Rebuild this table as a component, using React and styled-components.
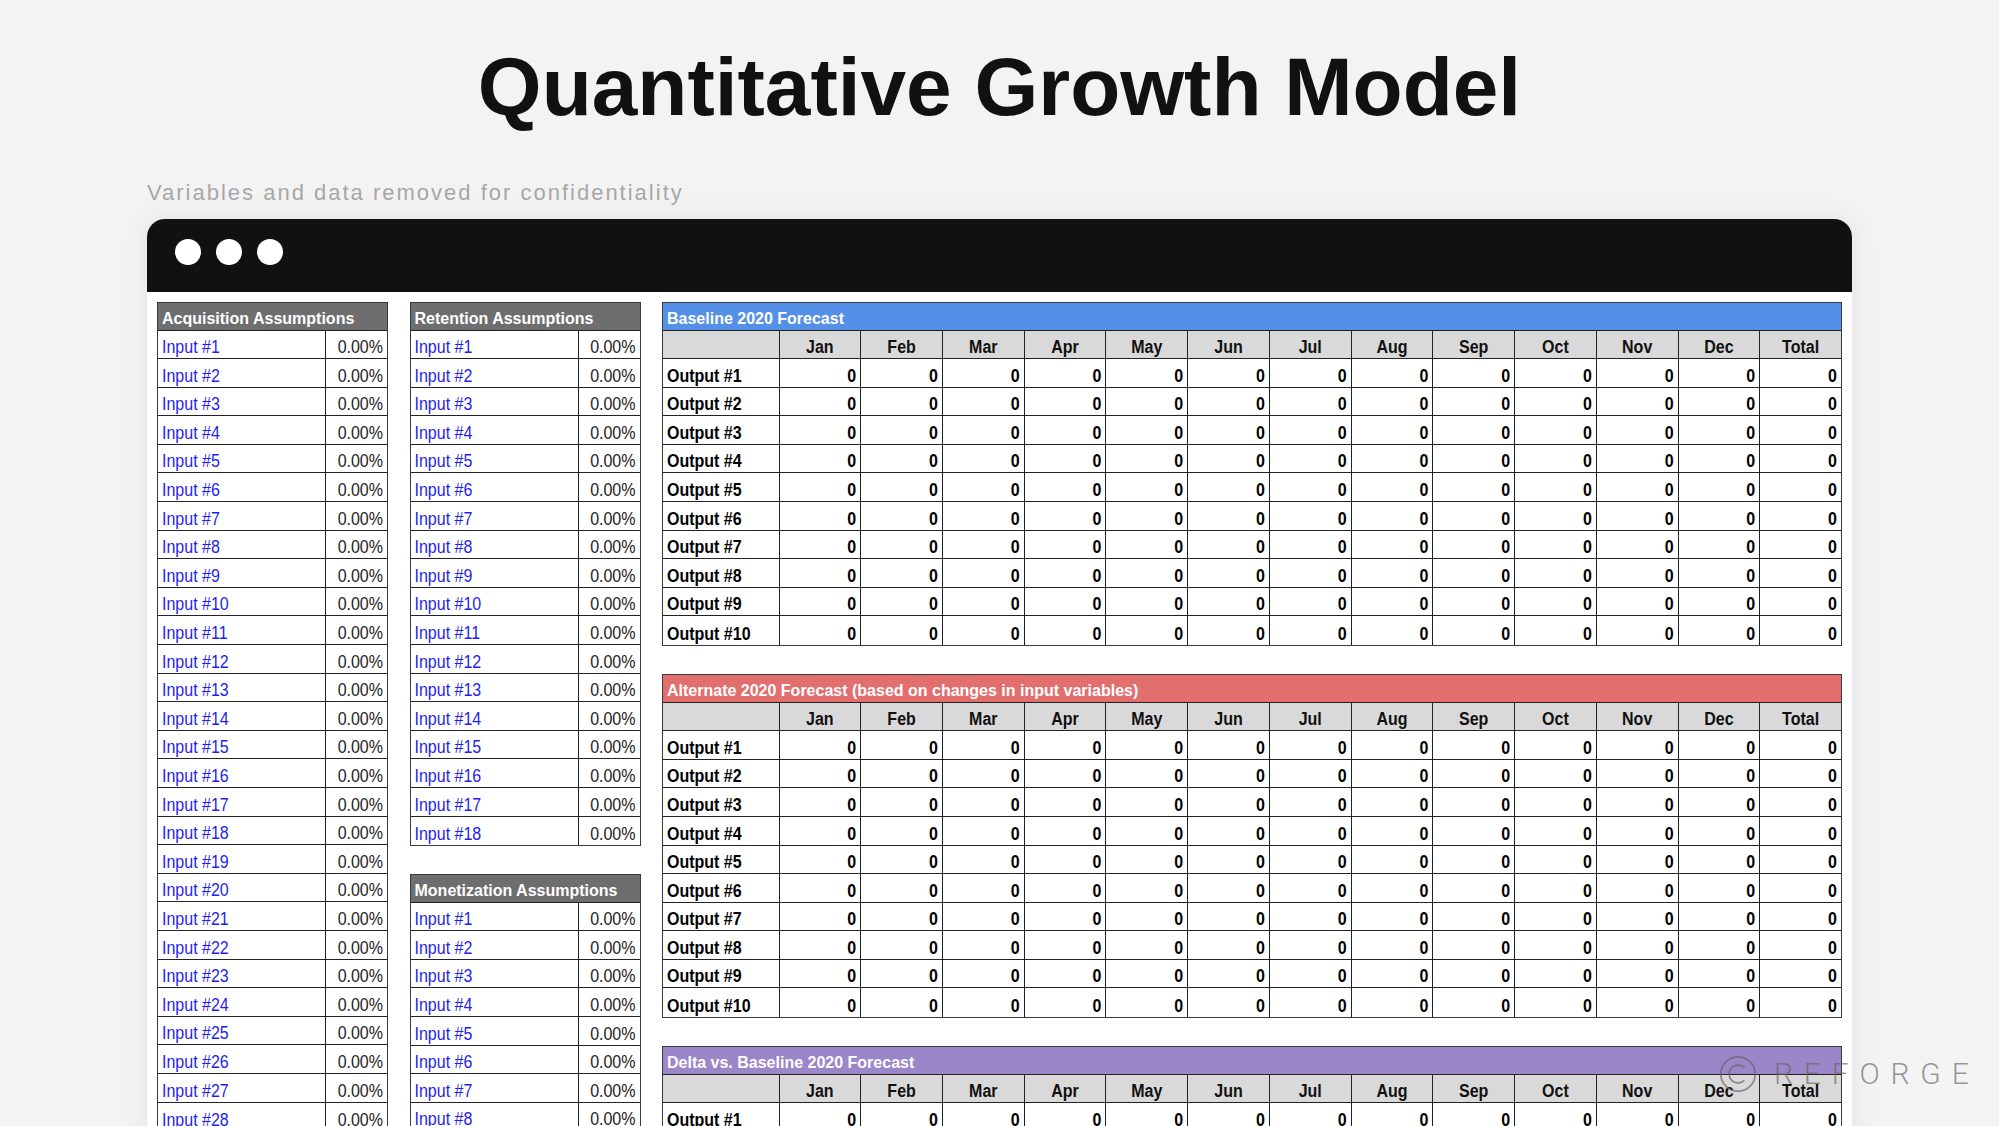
import React from 'react';
import styled, { createGlobalStyle } from 'styled-components';

const GlobalStyle = createGlobalStyle`
  html, body {
    margin: 0;
    padding: 0;
    background: #f3f3f3;
    height: 1126px;
    overflow: hidden;
  }
  body {
    font-family: "Liberation Sans", Arial, sans-serif;
  }
  *, *::before, *::after { box-sizing: border-box; }
`;

const Page = styled.div`
  position: relative;
  width: 1999px;
  height: 1126px;
  overflow: hidden;
  padding-top: 46px;
`;

const Title = styled.h1`
  margin: 0;
  text-align: center;
  font-family: "Liberation Sans", Arial, sans-serif;
  font-weight: 700;
  font-size: 82px;
  line-height: 82px;
  color: #111;
`;

const Frame = styled.div`
  width: 1705px;
  margin: 54px auto 0;
`;

const Subtitle = styled.p`
  margin: 0;
  font-family: "Liberation Sans", Arial, sans-serif;
  font-size: 22px;
  line-height: 22px;
  letter-spacing: 2px;
  color: #a7a7a7;
`;

const Window = styled.div`
  margin-top: 15px;
  border-radius: 18px 18px 0 0;
  overflow: hidden;
  background: #fff;
  box-shadow: 0 0 28px rgba(0, 0, 0, 0.07);
`;

const TitleBar = styled.div`
  height: 73px;
  background: #111;
  display: flex;
  gap: 15px;
  padding: 20px 0 0 28px;
`;

const Dot = styled.span`
  width: 26px;
  height: 26px;
  border-radius: 50%;
  background: #fff;
`;

const Content = styled.div`
  display: grid;
  grid-template-columns: 231px 231px 1fr;
  column-gap: 21.5px;
  align-items: start;
  padding: 10px;
`;

const Column = styled.div`
  display: flex;
  flex-direction: column;
  gap: 28px;
`;

const Sheet = styled.div`
  border: 1.5px solid #3a3a3a;
  background: #fff;
  display: flex;
  flex-direction: column;
  font-family: "Liberation Sans", Arial, sans-serif;
`;

const SheetTitle = styled.div`
  height: 27.5px;
  background: ${(p) => p.$bg};
  color: #fff;
  font-weight: 700;
  font-size: 16px;
  line-height: 18px;
  display: flex;
  align-items: flex-end;
  padding: 0 4px 1.5px;
  border-bottom: 1px solid #222;
  white-space: nowrap;
  overflow: hidden;
`;

const Row = styled.div`
  display: grid;
  grid-template-columns: ${(p) => p.$cols};
  height: 28.6px;
  border-bottom: 1px solid #222;
  background: ${(p) => (p.$head ? '#d9d9d9' : '#fff')};
  &:last-child {
    border-bottom: none;
  }
`;

const Cell = styled.div`
  display: flex;
  align-items: flex-end;
  padding: 0 4px 1px;
  font-size: 16px;
  line-height: 18px;
  color: #111;
  border-left: 1px solid #222;
  white-space: nowrap;
  overflow: hidden;
  &:first-child {
    border-left: none;
  }
`;

/* spreadsheet glyphs in the reference are a narrow, taller cut */
const Glyphs = styled.span`
  display: inline-block;
  transform: scaleY(1.15);
  transform-origin: 50% 80%;
`;

const InputName = styled(Cell)`
  color: #1e1ef0;
`;

const Percent = styled(Cell)`
  justify-content: flex-end;
  color: #222;
`;

const OutputName = styled(Cell)`
  font-weight: 700;
  color: #000;
`;

const Num = styled(Cell)`
  justify-content: flex-end;
  font-weight: 700;
  color: #000;
`;

const Month = styled(Cell)`
  justify-content: center;
  font-weight: 700;
  color: #111;
`;

const Watermark = styled.div`
  position: absolute;
  left: 1719px;
  top: 1055px;
  display: flex;
  align-items: center;
  gap: 17px;
  pointer-events: none;
  color: rgba(100, 100, 100, 0.66);
`;

const WatermarkText = styled.span`
  font-family: Roboto, "Liberation Sans", sans-serif;
  font-weight: 300;
  font-size: 30px;
  line-height: 1;
  letter-spacing: 10.8px;
`;

const ASSUMPTION_COLS = '167px 1fr';
const FORECAST_COLS = '115.5px repeat(13, 1fr)';
const MONTHS = ['Jan', 'Feb', 'Mar', 'Apr', 'May', 'Jun', 'Jul', 'Aug', 'Sep', 'Oct', 'Nov', 'Dec', 'Total'];

function Assumptions({ title, count }) {
  return (
    <Sheet>
      <SheetTitle $bg="#6e6e6e">{title}</SheetTitle>
      {Array.from({ length: count }, (_, i) => (
        <Row key={i} $cols={ASSUMPTION_COLS}>
          <InputName>
            <Glyphs>Input #{i + 1}</Glyphs>
          </InputName>
          <Percent>
            <Glyphs>0.00%</Glyphs>
          </Percent>
        </Row>
      ))}
    </Sheet>
  );
}

function Forecast({ title, color }) {
  return (
    <Sheet>
      <SheetTitle $bg={color}>{title}</SheetTitle>
      <Row $cols={FORECAST_COLS} $head>
        <Cell />
        {MONTHS.map((m) => (
          <Month key={m}>
            <Glyphs>{m}</Glyphs>
          </Month>
        ))}
      </Row>
      {Array.from({ length: 10 }, (_, i) => (
        <Row key={i} $cols={FORECAST_COLS}>
          <OutputName>
            <Glyphs>Output #{i + 1}</Glyphs>
          </OutputName>
          {MONTHS.map((m) => (
            <Num key={m}>
              <Glyphs>0</Glyphs>
            </Num>
          ))}
        </Row>
      ))}
    </Sheet>
  );
}

function CopyrightMark() {
  return (
    <svg width="38" height="38" viewBox="0 0 38 38" fill="none" stroke="currentColor" strokeWidth="1.8">
      <circle cx="19" cy="19" r="17.2" />
      <path d="M25.4 12.6 A9 9 0 1 0 25.4 25.4" />
    </svg>
  );
}

export default function App() {
  return (
    <Page>
      <GlobalStyle />
      <Title>Quantitative Growth Model</Title>
      <Frame>
        <Subtitle>Variables and data removed for confidentiality</Subtitle>
        <Window>
          <TitleBar>
            <Dot />
            <Dot />
            <Dot />
          </TitleBar>
          <Content>
            <Column>
              <Assumptions title="Acquisition Assumptions" count={28} />
            </Column>
            <Column>
              <Assumptions title="Retention Assumptions" count={18} />
              <Assumptions title="Monetization Assumptions" count={10} />
            </Column>
            <Column>
              <Forecast title="Baseline 2020 Forecast" color="#5590e8" />
              <Forecast title="Alternate 2020 Forecast (based on changes in input variables)" color="#e26e6e" />
              <Forecast title="Delta vs. Baseline 2020 Forecast" color="#9a86c8" />
            </Column>
          </Content>
        </Window>
      </Frame>
      <Watermark>
        <CopyrightMark />
        <WatermarkText>REFORGE</WatermarkText>
      </Watermark>
    </Page>
  );
}
